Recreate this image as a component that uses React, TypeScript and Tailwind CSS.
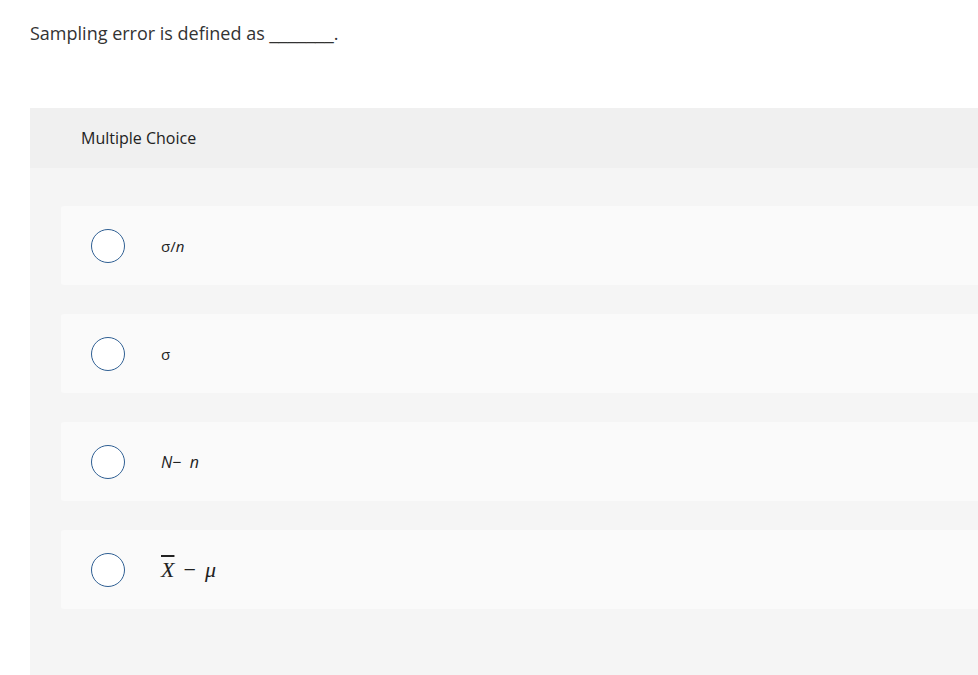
import React from "react";

const Radio = () => (
  <span className="block w-[34px] h-[34px] rounded-full border-[1.5px] border-[#2f5f93] bg-white shrink-0" />
);

export default function App() {
  const opts: React.ReactNode[] = [
    <span className="text-[15px] text-[#222]" style={{ fontFamily: '"Open Sans", sans-serif' }}>σ/<i>n</i></span>,
    <span className="text-[15px] text-[#222]" style={{ fontFamily: '"Open Sans", sans-serif' }}>σ</span>,
    <span className="text-[16px] text-[#222]" style={{ fontFamily: '"Open Sans", sans-serif' }}><i>N</i>−&nbsp; <i>n</i></span>,
    <span className="text-[22px] text-[#222] whitespace-pre" style={{ fontFamily: '"Liberation Serif", serif' }}>
      <i className="overline">X</i><span className="ml-[9px] mr-[9px]">−</span><i>μ</i>
    </span>,
  ];
  return (
    <div className="w-[978px] h-[675px] overflow-hidden bg-white" style={{ fontFamily: '"Open Sans", "Liberation Sans", sans-serif' }}>
      <div className="pl-[30px] pt-[20px] h-[108px] text-[18px] text-[#333]">
        Sampling error is defined as <span className="text-[16.5px]" style={{ fontFamily: '"Liberation Sans", sans-serif' }}>_______</span>.
      </div>
      <div className="ml-[30px] w-[1000px] bg-[#f5f5f5] pb-[70px]">
        <div className="h-[60px] bg-[#f0f0f0] flex items-center pl-[51px] text-[16px] text-[#222]">
          Multiple Choice
        </div>
        <div className="pt-[38px] pl-[31px] flex flex-col gap-[29px]">
          {opts.map((o, i) => (
            <div key={i} className="h-[79px] bg-[#fafafa] rounded-[3px] flex items-center pl-[30px]">
              <Radio />
              <div className="ml-[36px]">{o}</div>
            </div>
          ))}
        </div>
      </div>
    </div>
  );
}
